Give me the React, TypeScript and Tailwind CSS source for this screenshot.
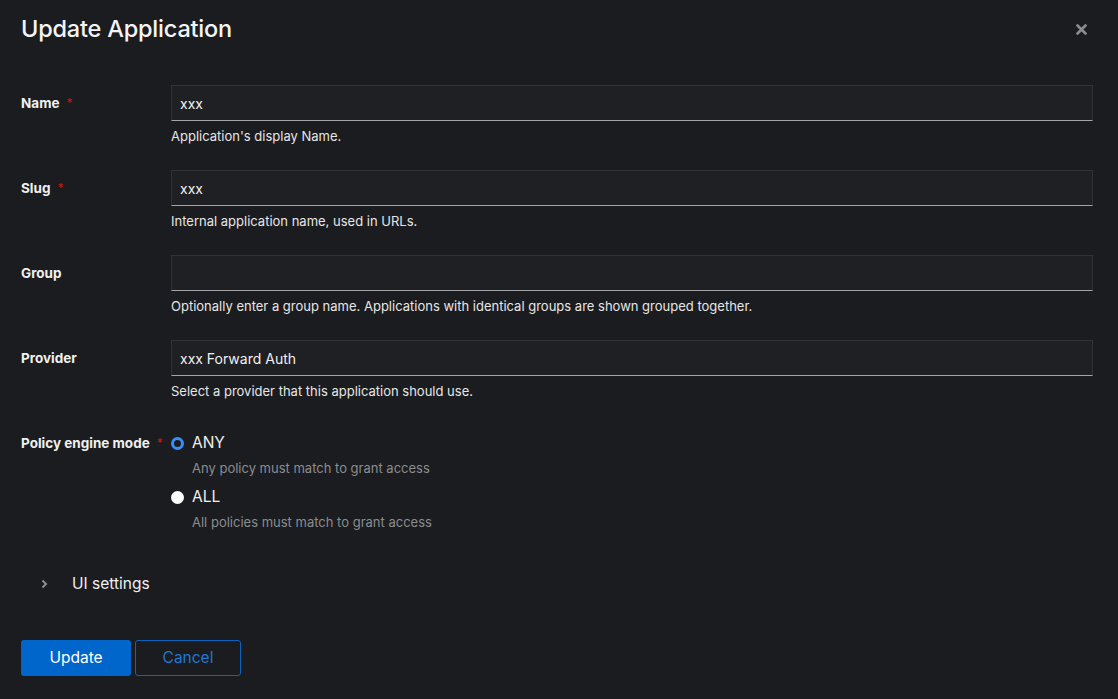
import React from "react";

type Field = {
    label: string;
    required?: boolean;
    value: string;
    help: string;
};

const fields: Field[] = [
    { label: "Name", required: true, value: "xxx", help: "Application's display Name." },
    { label: "Slug", required: true, value: "xxx", help: "Internal application name, used in URLs." },
    {
        label: "Group",
        value: "",
        help: "Optionally enter a group name. Applications with identical groups are shown grouped together.",
    },
    { label: "Provider", value: "xxx Forward Auth", help: "Select a provider that this application should use." },
];

function Label({ text, required }: { text: string; required?: boolean }) {
    return (
        <div className="flex w-[150px] shrink-0 items-start text-[13.5px] font-bold leading-[20px] text-[#f0f0f0]">
            <span>{text}</span>
            {required ? <span className="ml-[7px] text-[12px] font-normal text-[#c9190b]">*</span> : null}
        </div>
    );
}

function TextRow({ field }: { field: Field }) {
    return (
        <div className="flex">
            <div className="flex h-9 items-center">
                <Label required={field.required} text={field.label} />
            </div>
            <div className="flex-1">
                <div className="flex h-9 items-center border border-[#303236] border-b-[#a3a5a8] bg-[#1f2024] px-[8px] text-[14px] text-[#f0f0f0]">
                    {field.value}
                </div>
                <p className="mt-[7px] text-[13px] leading-[16px] text-[#e6e6e6]">{field.help}</p>
            </div>
        </div>
    );
}

function Radio({ checked, label, help }: { checked?: boolean; label: string; help: string }) {
    return (
        <div>
            <div className="flex h-6 items-center">
                {checked ? (
                    <span className="h-[13px] w-[13px] rounded-full border-[3px] border-[#3a8ef6] bg-[#1b1c1f]" />
                ) : (
                    <span className="h-[13px] w-[13px] rounded-full bg-white" />
                )}
                <span className="ml-[8px] text-[15.5px] text-[#f0f0f0]">{label}</span>
            </div>
            <p className="ml-[21px] mt-[4px] text-[13px] leading-[18px] text-[#8a8d90]">{help}</p>
        </div>
    );
}

export default function App() {
    return (
        <div
            className="h-[699px] w-full bg-[#1b1c1f] pl-[21px] pr-[25px]"
            style={{ fontFamily: "Inter, 'Open Sans', sans-serif" }}
        >
            <div className="flex items-center justify-between pt-[13px]">
                <h1 className="text-[23.5px] font-medium leading-[32px] tracking-[-0.2px] text-[#f4f4f4]">
                    Update Application
                </h1>
                <button className="flex h-6 w-6 items-center justify-center" type="button">
                    <svg fill="none" height="11" stroke="#8a8d90" strokeLinecap="round" strokeWidth="2.6" viewBox="0 0 11 11" width="11">
                        <path d="M1.5 1.5l8 8M9.5 1.5l-8 8" />
                    </svg>
                </button>
            </div>

            <div className="mt-[40px] flex flex-col gap-[26px]">
                {fields.map((f) => (
                    <TextRow field={f} key={f.label} />
                ))}
            </div>

            <div className="mt-[32px] flex">
                <div className="flex h-6 items-center">
                    <Label required text="Policy engine mode" />
                </div>
                <div className="flex flex-col gap-[8px]">
                    <Radio checked help="Any policy must match to grant access" label="ANY" />
                    <Radio help="All policies must match to grant access" label="ALL" />
                </div>
            </div>

            <div className="mt-[41px] flex h-6 items-center">
                <svg className="ml-[20px]" fill="none" height="10" stroke="#8a8d90" strokeWidth="2" viewBox="0 0 7 10" width="7">
                    <path d="M1.5 1.5L5 5 1.5 8.5" />
                </svg>
                <span className="ml-[24px] text-[15.5px] text-[#f0f0f0]">UI settings</span>
            </div>

            <div className="mt-[44px] flex gap-[4px]">
                <button className="h-9 w-[110px] rounded-[3px] bg-[#0066cc] text-[15.5px] text-white" type="button">
                    Update
                </button>
                <button
                    className="h-9 w-[106px] rounded-[3px] border border-[#0b63bd] text-[15.5px] text-[#1f78d1]"
                    type="button"
                >
                    Cancel
                </button>
            </div>
        </div>
    );
}
